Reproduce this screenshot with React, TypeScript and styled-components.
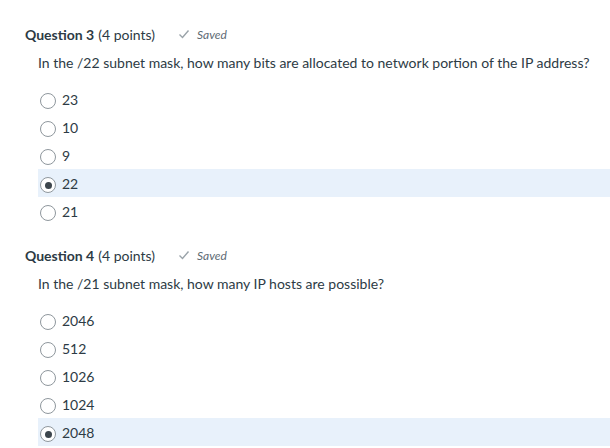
import React from "react";
import styled, { createGlobalStyle } from "styled-components";

const Global = createGlobalStyle`
  html, body { margin: 0; padding: 0; background: #fff; }
  body { font-family: Lato, "Open Sans", sans-serif; color: #2d3b45; }
`;

const Page = styled.div`
  width: 610px;
  height: 448px;
  overflow: hidden;
  padding-top: 23px;
  box-sizing: border-box;
`;

const Question = styled.section`
  display: flex;
  flex-direction: column;
  margin-bottom: 19px;
`;

const Header = styled.div`
  display: flex;
  align-items: center;
  height: 22px;
  padding-left: 25px;
  font-size: 14px;
`;

const Title = styled.span`
  font-weight: 700;
`;

const Points = styled.span`
  font-weight: 400;
  margin-left: 4px;
`;

const SavedTag = styled.span`
  display: flex;
  align-items: center;
  margin-left: 23px;
  font-size: 12px;
  font-style: italic;
  color: #5d6a74;
  gap: 7px;
`;

const Prompt = styled.p`
  margin: 8px 0 12px 38px;
  font-size: 14px;
  line-height: 20px;
`;

const Options = styled.div`
  display: flex;
  flex-direction: column;
`;

const Option = styled.div<{ $selected?: boolean }>`
  display: flex;
  align-items: center;
  height: 28px;
  margin-left: 38px;
  padding-left: 2px;
  background: ${(p) => (p.$selected ? "#e8f1fb" : "transparent")};
  font-size: 14px;
`;

const Radio = styled.span<{ $checked?: boolean }>`
  width: 16px;
  height: 16px;
  border-radius: 50%;
  border: 1px solid #8f979d;
  background: #fff;
  box-sizing: border-box;
  margin-right: 6px;
  margin-top: 4px;
  display: flex;
  align-items: center;
  justify-content: center;
  &::after {
    content: "";
    display: ${(p) => (p.$checked ? "block" : "none")};
    width: 7px;
    height: 7px;
    border-radius: 50%;
    background: #3d464d;
  }
`;

const Check = () => (
  <svg width="12" height="10" viewBox="0 0 12 10">
    <path d="M1.5 5.5 L4.5 8.5 L10.5 1.5" fill="none" stroke="#9aa3a9" strokeWidth="1.4" />
  </svg>
);

const data = [
  {
    n: 3,
    q: "In the /22 subnet mask, how many bits are allocated to network portion of the IP address?",
    opts: ["23", "10", "9", "22", "21"],
    sel: 3,
  },
  {
    n: 4,
    q: "In the /21 subnet mask, how many IP hosts are possible?",
    opts: ["2046", "512", "1026", "1024", "2048"],
    sel: 4,
  },
];

export default function App() {
  return (
    <Page>
      <Global />
      {data.map((d) => (
        <Question key={d.n}>
          <Header>
            <Title>Question {d.n}</Title>
            <Points>(4 points)</Points>
            <SavedTag>
              <Check />
              Saved
            </SavedTag>
          </Header>
          <Prompt>{d.q}</Prompt>
          <Options>
            {d.opts.map((o, i) => (
              <Option key={o} $selected={i === d.sel}>
                <Radio $checked={i === d.sel} />
                {o}
              </Option>
            ))}
          </Options>
        </Question>
      ))}
    </Page>
  );
}
